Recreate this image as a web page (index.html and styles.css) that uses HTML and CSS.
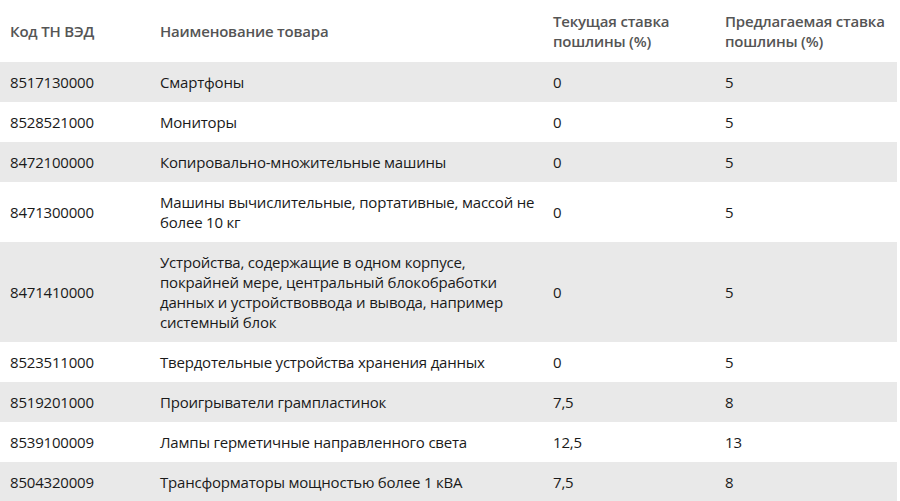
FILE: index.html
```html
<!DOCTYPE html>
<html lang="ru">
<head>
<meta charset="utf-8">
<link rel="stylesheet" href="styles.css">
</head>
<body>
<table class="tariffs">
  <colgroup>
    <col class="c-code">
    <col class="c-name">
    <col class="c-cur">
    <col class="c-new">
  </colgroup>
  <thead>
    <tr>
      <th>Код ТН ВЭД</th>
      <th>Наименование товара</th>
      <th>Текущая ставка<br>пошлины (%)</th>
      <th>Предлагаемая ставка<br>пошлины (%)</th>
    </tr>
  </thead>
  <tbody>
    <tr class="odd"><td>8517130000</td><td>Смартфоны</td><td>0</td><td>5</td></tr>
    <tr><td>8528521000</td><td>Мониторы</td><td>0</td><td>5</td></tr>
    <tr class="odd"><td>8472100000</td><td>Копировально-множительные машины</td><td>0</td><td>5</td></tr>
    <tr><td>8471300000</td><td>Машины вычислительные, портативные, массой не<br>более 10 кг</td><td>0</td><td>5</td></tr>
    <tr class="odd"><td>8471410000</td><td>Устройства, содержащие в одном корпусе,<br>покрайней мере, центральный блокобработки<br>данных и устройствоввода и вывода, например<br>системный блок</td><td>0</td><td>5</td></tr>
    <tr><td>8523511000</td><td>Твердотельные устройства хранения данных</td><td>0</td><td>5</td></tr>
    <tr class="odd"><td>8519201000</td><td>Проигрыватели грампластинок</td><td>7,5</td><td>8</td></tr>
    <tr><td>8539100009</td><td>Лампы герметичные направленного света</td><td>12,5</td><td>13</td></tr>
    <tr class="odd"><td>8504320009</td><td>Трансформаторы мощностью более 1 кВА</td><td>7,5</td><td>8</td></tr>
  </tbody>
</table>
</body>
</html>
```

FILE: styles.css
```css
html, body {
  margin: 0;
  padding: 0;
  background: #ffffff;
}

.tariffs {
  width: 897px;
  border-collapse: collapse;
  table-layout: fixed;
  font-family: "Open Sans", "Noto Sans", sans-serif;
  font-size: 15px;
  letter-spacing: -0.2px;
  color: #1a1a1a;
}

.c-code { width: 150px; }
.c-name { width: 393px; }
.c-cur { width: 172px; }
.c-new { width: 182px; }

.tariffs th {
  text-align: left;
  vertical-align: middle;
  font-weight: 600;
  color: #555555;
  line-height: 20px;
  padding: 11px 10px;
  white-space: nowrap;
}

.tariffs td {
  vertical-align: middle;
  line-height: 20px;
  padding: 10px 10px;
  white-space: nowrap;
}

.tariffs tr.odd td {
  background: #e9e9e9;
}
```
